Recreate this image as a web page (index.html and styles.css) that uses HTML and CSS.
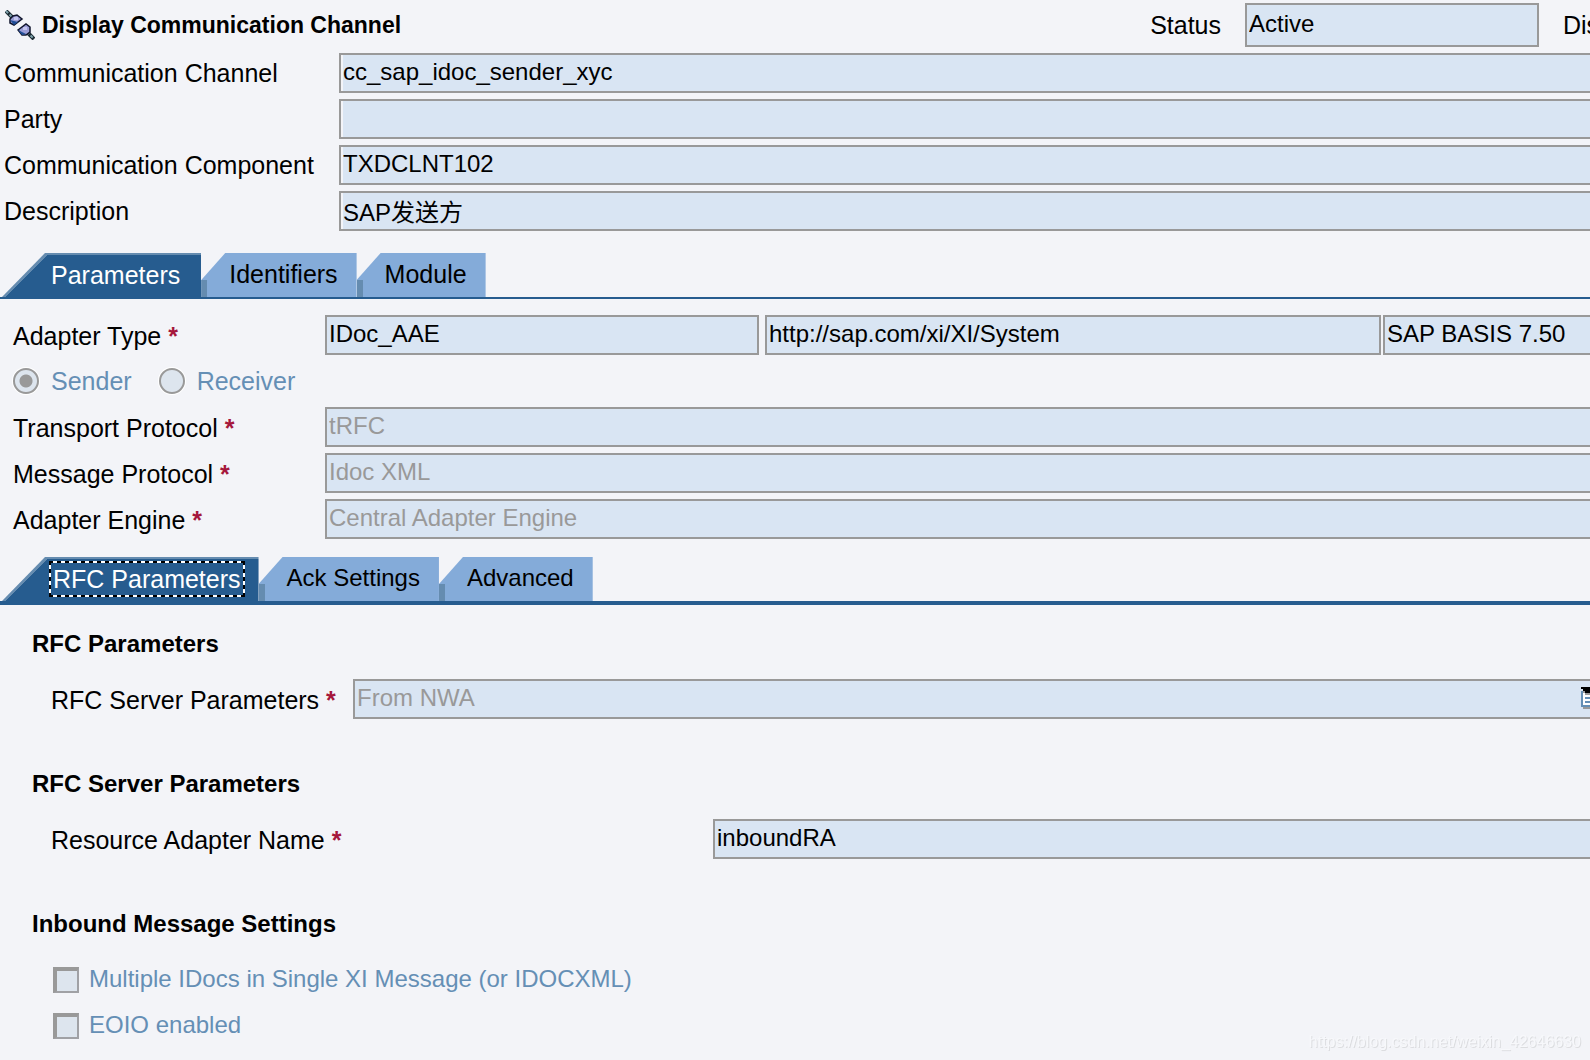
FILE: index.html
```
<!DOCTYPE html>
<html lang="en">
<head>
    <meta charset="UTF-8">
    <meta name="viewport" content="width=device-width, initial-scale=1.0">
    <title>Display Communication Channel</title>
    <link rel="stylesheet" href="styles.css">
</head>
<body>
    <!-- Title bar -->
    <header class="title-bar">
        <svg class="channel-icon" viewBox="0 0 30 30" aria-hidden="true">
            <path d="M1 1L8 8M22 22L29 29" stroke="#1c2b33" stroke-width="4"/>
            <path d="M1 1L8 8M22 22L29 29" stroke="#7fa3ad" stroke-width="2" stroke-dasharray="3 2"/>
            <path d="M5 13V9L8 6L12 5L17 9L9 15Z" fill="#9a9cd6" stroke="#10152c" stroke-width="1.5"/>
            <path d="M5 10L9 15L13 12Z" fill="#1f4d96"/>
            <path d="M9 7H13V10H9Z" fill="#c3c5ee"/>
            <path d="M13 20L21 14L25 17V22L21 25L17 25Z" fill="#9a9cd6" stroke="#10152c" stroke-width="1.5"/>
            <path d="M13 20L17 25L21 24Z" fill="#1f4d96"/>
            <path d="M18 17H22V20H18Z" fill="#c3c5ee"/>
        </svg>
        <h1 class="title">Display Communication Channel</h1>
        <div class="status">
            <label for="status">Status</label>
            <input type="text" id="status" class="field status-field" value="Active" readonly>
            <span class="status-next">Dis</span>
        </div>
    </header>

    <!-- Channel header -->
    <div class="channel">
        <label for="channel">Communication Channel</label>
        <input type="text" id="channel" class="field" value="cc_sap_idoc_sender_xyc" readonly>
        <label for="party">Party</label>
        <input type="text" id="party" class="field" value="" readonly>
        <label for="component">Communication Component</label>
        <input type="text" id="component" class="field" value="TXDCLNT102" readonly>
        <label for="description">Description</label>
        <input type="text" id="description" class="field" value="SAP发送方" readonly>
    </div>

    <nav class="tabs">
        <button class="tab active">Parameters</button>
        <button class="tab">Identifiers</button>
        <button class="tab">Module</button>
    </nav>

    <!-- Adapter -->
    <div class="adapter">
        <div class="row">
            <label class="label" for="adapterType">Adapter Type <span class="required">*</span></label>
            <div class="adapter-type">
                <input type="text" id="adapterType" class="field" value="IDoc_AAE" readonly>
                <input type="text" class="field type-namespace" value="http://sap.com/xi/XI/System" aria-label="Namespace" readonly>
                <input type="text" class="field open" value="SAP BASIS 7.50" aria-label="Software component" readonly>
            </div>
        </div>
        <div class="directions">
            <label class="option"><input type="radio" class="radio" name="direction" checked disabled>Sender</label>
            <label class="option"><input type="radio" class="radio" name="direction" disabled>Receiver</label>
        </div>
        <div class="row">
            <label class="label" for="transport">Transport Protocol <span class="required">*</span></label>
            <input type="text" id="transport" class="field open" value="tRFC" disabled>
        </div>
        <div class="row">
            <label class="label" for="message">Message Protocol <span class="required">*</span></label>
            <input type="text" id="message" class="field open" value="Idoc XML" disabled>
        </div>
        <div class="row">
            <label class="label" for="engine">Adapter Engine <span class="required">*</span></label>
            <input type="text" id="engine" class="field open" value="Central Adapter Engine" disabled>
        </div>
    </div>

    <nav class="tabs sub-tabs">
        <button class="tab active"><span class="focus">RFC Parameters</span></button>
        <button class="tab">Ack Settings</button>
        <button class="tab">Advanced</button>
    </nav>

    <!-- RFC settings -->
    <main class="settings">
        <section class="section">
            <h2 class="section-title">RFC Parameters</h2>
            <div class="row server-row">
                <label class="label" for="server">RFC Server Parameters <span class="required">*</span></label>
                <div class="select-wrap">
                    <select id="server" class="field open" disabled>
                        <option>From NWA</option>
                    </select>
                    <svg class="list-icon" viewBox="0 0 9 22" aria-hidden="true">
                        <path d="M2 20H9V22H2Z" fill="#999"/>
                        <path d="M0 4H9V20H0Z" fill="#658fb5"/>
                        <path d="M2 4H9V18H2Z" fill="#fff"/>
                        <path d="M4 10H9V12H4ZM4 14H9V16H4Z" fill="#658fb5"/>
                        <path d="M2 4H4V6H9V8H4V6H2Z" fill="#999"/>
                        <path d="M0 0H9V6H4V4H2V2H0Z" fill="#000"/>
                    </svg>
                </div>
            </div>
        </section>
        <section class="section">
            <h2 class="section-title">RFC Server Parameters</h2>
            <div class="row resource-row">
                <label class="label" for="resource">Resource Adapter Name <span class="required">*</span></label>
                <input type="text" id="resource" class="field open" value="inboundRA" readonly>
            </div>
        </section>
        <section class="section">
            <h2 class="section-title">Inbound Message Settings</h2>
            <div class="checks">
                <label class="check-option"><input type="checkbox" class="checkbox" disabled>Multiple IDocs in Single XI Message (or IDOCXML)</label>
                <label class="check-option"><input type="checkbox" class="checkbox" disabled>EOIO enabled</label>
            </div>
        </section>
    </main>

    <div class="watermark">https://blog.csdn.net/weixin_42646630</div>
</body>
</html>
```
FILE: styles.css
```
* {
    box-sizing: border-box;
}

body {
    margin: 0;
    background-color: #f3f4f8;
    color: #000;
    font-family: "Liberation Sans", "Noto Sans CJK SC", sans-serif;
    font-size: 25px;
    line-height: 30px;
    overflow: hidden;
}

.title-bar {
    display: flex;
    align-items: center;
    padding: 3px 0 6px 5px;
}

.channel-icon {
    width: 30px;
    height: 30px;
    margin-right: 7px;
    fill: none;
}

.title {
    margin: 0;
    font-size: 23px;
}

.status {
    display: flex;
    align-items: center;
    gap: 24px;
    margin-left: auto;
}

.status-next {
    width: 27px;
    overflow: hidden;
}

.field {
    width: 100%;
    height: 40px;
    min-width: 0;
    margin: 0;
    padding: 0 2px 2px;
    border: 2px solid #999;
    border-radius: 0;
    background-color: #d9e5f3;
    color: #000;
    font: inherit;
    font-size: 24px;
    outline: none;
    appearance: none;
}

.field:disabled {
    color: #999;
    opacity: 1;
}

.status-field {
    width: 294px;
    height: 44px;
}

/* fields that run on past the right edge */
.open,
.channel .field {
    border-right: none;
}

.channel {
    display: grid;
    grid-template-columns: 335px 1fr;
    row-gap: 6px;
    align-items: center;
    padding-left: 4px;
}

.channel .field {
    box-shadow: inset 2px 0 #f3f4f8;
}

.tabs {
    display: flex;
    margin-top: 22px;
    padding-left: 2px;
    border-bottom: 2px solid #265c8f;
}

.sub-tabs {
    margin-top: 18px;
    border-bottom-width: 4px;
}

.tab {
    height: 44px;
    padding: 0 19px 2px 28px;
    border: none;
    background: linear-gradient(#658cb0, #658cb0) 0 100% / 6px 17px no-repeat #84abd9;
    clip-path: polygon(0 27px, 24px 0, 100% 0, 100% 100%, 0 100%);
    color: #000;
    font: inherit;
}

.sub-tabs .tab {
    font-size: 24px;
}

.tab.active {
    padding: 0 21px 3px 49px;
    border-top: 2px solid #658cb0;
    background: linear-gradient(135deg, #658cb0 32px, #265c8f 32px);
    clip-path: polygon(43px 0, 100% 0, 100% 100%, 0 100%);
    color: #fff;
    font-size: 25px;
}

.sub-tabs .tab.active {
    padding: 0 14px 3px 47px;
}

.focus {
    display: block;
    padding: 3px 4px;
    background:
        repeating-linear-gradient(90deg, #000 0 4px, #fff 4px 8px) 0 0 / 100% 2px no-repeat,
        repeating-linear-gradient(90deg, #000 0 4px, #fff 4px 8px) 0 100% / 100% 2px no-repeat,
        repeating-linear-gradient(#000 0 4px, #fff 4px 8px) 0 0 / 2px 100% no-repeat,
        repeating-linear-gradient(#000 0 4px, #fff 4px 8px) 100% 0 / 2px 100% no-repeat;
}

.adapter {
    display: flex;
    flex-direction: column;
    gap: 6px;
    padding: 16px 0 0 13px;
}

.row {
    display: grid;
    grid-template-columns: 312px 1fr;
    align-items: center;
}

.label {
    padding-top: 2px;
}

.required {
    color: #a5173c;
    font-weight: bold;
}

.adapter-type {
    display: grid;
    grid-template-columns: 434fr 624fr 207fr;
}

.adapter-type .field:first-child {
    width: auto;
}

.type-namespace {
    width: auto;
    margin: 0 2px 0 6px;
}

.directions {
    display: flex;
    gap: 27px;
    height: 40px;
    align-items: center;
}

.option,
.check-option {
    display: flex;
    align-items: center;
    color: #658fb5;
}

.check-option {
    height: 40px;
    font-size: 24px;
}

.radio {
    width: 26px;
    height: 26px;
    margin: 0 12px 0 0;
    border: 2px solid #999;
    border-radius: 50%;
    background-color: #dde5ee;
    box-shadow: 0 0 0 1px #fff;
    appearance: none;
}

.radio:checked {
    background: radial-gradient(circle, #999 6px, #dde5ee 7px);
}

.settings {
    padding: 24px 0 0 32px;
}

.section {
    margin-bottom: 50px;
}

.section-title {
    margin: 0 0 20px;
    font-size: 24px;
    line-height: 30px;
}

.server-row,
.resource-row {
    padding-left: 19px;
}

.server-row {
    grid-template-columns: 302px 1fr;
}

.resource-row {
    grid-template-columns: 662px 1fr;
}

.select-wrap {
    position: relative;
    display: flex;
}

.list-icon {
    position: absolute;
    top: 8px;
    right: 0;
    width: 9px;
    height: 22px;
}

.checks {
    display: flex;
    flex-direction: column;
    gap: 6px;
    padding-left: 21px;
}

.checkbox {
    width: 26px;
    height: 26px;
    margin: 2px 10px 0 0;
    border: 2px solid #a0a1a5;
    border-top: 4px solid #999;
    border-left: 4px solid #999;
    background-color: #dde5ee;
    appearance: none;
}

.watermark {
    position: fixed;
    right: 9px;
    bottom: 3px;
    color: #f7f8fb;
    font-size: 16px;
    text-shadow: 1px 1px #dcdde0;
}
```
